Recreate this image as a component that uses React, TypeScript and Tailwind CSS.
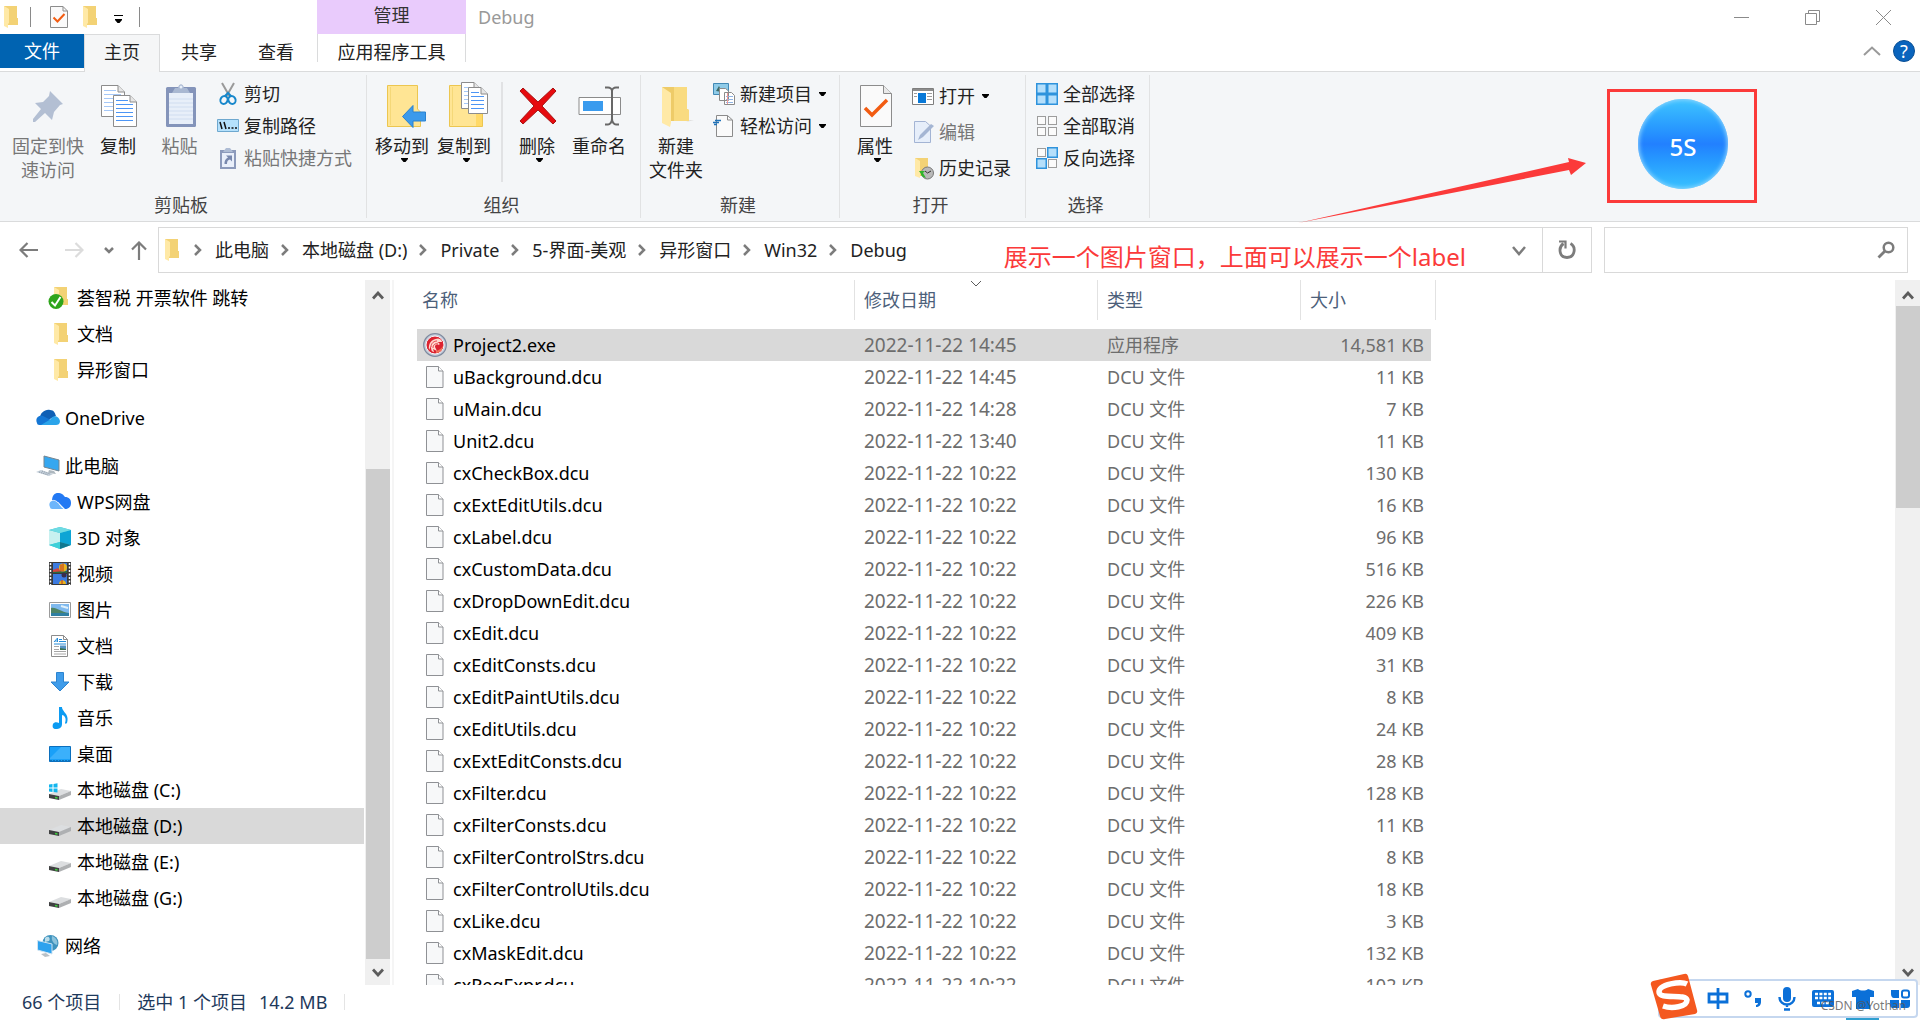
import React from "react";

type P = { className?: string };
type Kids = { children: React.ReactNode };

function Svg({ w, h, vb, children, className = "" }: { w: number; h: number; vb?: string; className?: string } & Kids) {
  return (
    <svg width={w} height={h} viewBox={vb ?? `0 0 ${w} ${h}`} fill="none" aria-hidden="true" className={`shrink-0 ${className}`}>
      {children}
    </svg>
  );
}

/* ---------- small icons ---------- */
const Folder = ({ className }: P) => (
  <Svg w={22} h={22} className={className}>
    <path d="M5 0H18V12H19V19H5Z" fill="#f3d275" />
    <path d="M5 0L10 3V17L9 18V22L5 20Z" fill="#ffe9a6" />
  </Svg>
);
const FolderCheck = () => (
  <Svg w={22} h={22} className="overflow-visible">
    <path d="M5 0H18V12H19V18H5Z" fill="#f3d275" />
    <path d="M5 0L10 3V10H5Z" fill="#ffe9a6" />
    <circle cx="7" cy="14.500" r="7.500" fill="#2fa51c" />
    <path d="M2.500 15L6 18.500L11.500 10" stroke="#fff" strokeWidth="2" />
  </Svg>
);
const PropsSmall = () => (
  <Svg w={18} h={22}>
    <path d="M.5 .5H13L17.500 5V21.500H.5Z" fill="#fafafa" stroke="#8c8c8c" />
    <path d="M13 .5V5H17.500" stroke="#8c8c8c" />
    <path d="M3.500 11.500L7.500 15.500L14.500 8" stroke="#f25c12" strokeWidth="2" />
  </Svg>
);
const Page = () => (
  <Svg w={18} h={22}>
    <path d="M.5 .5H12.500L17 5V21.500H.5Z" fill="#f7f8f9" stroke="#8f9195" />
    <path d="M12.500 .5V5H17" fill="#fff" stroke="#8f9195" />
  </Svg>
);
const Exe = () => (
  <Svg w={24} h={24}>
    <circle cx="12" cy="12" r="11.300" fill="#c3ccda" stroke="#7f8b9f" strokeWidth="1.200" />
    <circle cx="12" cy="12" r="9" fill="#dc2330" stroke="#f5f5f8" />
    <path d="M6 17C5 11 8 6 15 5.500C18 6 19 8 19 9L14 9C17 10 17 11 16 12C13 11 12 12 12 14L14 18L10 16L11 19C8 19 8 15 8 13Z" fill="#ffd9cf" />
    <path d="M8 14C8 10 11 8 14 8M10 15C10 12 12 10 15 11" stroke="#dc2330" strokeWidth=".8" />
    <path d="M13 20C17 20 20 17 20 13C18 16 16 17 13 18Z" fill="#f0745c" />
  </Svg>
);
const Cloud = () => (
  <Svg w={24} h={22}>
    <path d="M4 11C4 6 9 2 14 3C18 3 19 6 20 9L12 13Z" fill="#0f5fb5" />
    <path d="M1 16C-1 12 2 8 7 9L17 14L8 18H5C3 18 1 18 1 16Z" fill="#1476d4" />
    <path d="M5 18L15 12C16 8 23 8 24 14C24 17 22 18 20 18Z" fill="#2ba4ea" />
  </Svg>
);
const Wps = () => (
  <Svg w={22} h={22}>
    <path d="M3 10C3 4 6 1.500 10 2C14 2.500 15 5 16 6C20 6 22 8.500 22 12C22 15.500 20 18 16 18L9 11Z" fill="#2379f3" />
    <path d="M1 16C-1 12 2 9 6 10C11 11 11 16 15 18H5C3 18 1 18 1 16Z" fill="#6db5fb" />
    <path d="M3 9.500C9 8 11 16 15 18" stroke="#fff" strokeWidth=".8" />
  </Svg>
);
const Pc = () => (
  <Svg w={24} h={22}>
    <path d="M8 1L23 5V16L8 12Z" fill="#35a7f0" stroke="#77858f" />
    <path d="M13 15L18 16L20 19L12 18Z" fill="#aeb8bf" />
    <path d="M0 17L5 15L17 19L13 21Z" fill="#c2cdd8" />
    <path d="M3 17L12 20M6 16L14 19" stroke="#8d9aa6" strokeDasharray="1 1" />
  </Svg>
);
const Cube = () => (
  <Svg w={22} h={22}>
    <path d="M11 0L22 3V18L11 22L0 18V3Z" fill="#36c0d6" />
    <path d="M0 3L11 6V15L0 18Z" fill="#c8f1f0" />
    <path d="M11 6L22 3V18L11 15Z" fill="#0ea5d5" />
    <path d="M0 18L11 15V22Z" fill="#3ed0d8" />
    <path d="M22 18L11 15V22Z" fill="#11788f" />
    <path d="M0 3L11 0L22 3L11 6Z" fill="#6fdbe3" />
  </Svg>
);
const Video = () => (
  <Svg w={22} h={24}>
    <path d="M0 0H22V23H0Z" fill="#3a3a3a" />
    <path d="M4 1H18V11H4ZM4 12H18V22H4Z" fill="#3c7be0" />
    <path d="M4 8L9 6L13 10V11H4Z" fill="#d2463f" />
    <path d="M4 10L18 9V11H4Z" fill="#2c6a3a" />
    <circle cx="14" cy="5.500" r="4" fill="#e9b51c" />
    <path d="M14 1.500V9.500M12 2.500V9" stroke="#bf3027" />
    <circle cx="15" cy="13" r="2.500" fill="#3a2d4d" />
    <path d="M10 22C10 17 17 17 17 22Z" fill="#e9b51c" />
    <path d="M13 18V22" stroke="#bf3027" />
    <path d="M1.500 1V23M20.500 1V23" stroke="#fff" strokeWidth="1.500" strokeDasharray="2 1.500" />
  </Svg>
);
const Picture = () => (
  <Svg w={22} h={22}>
    <path d="M.5 3.500H21.500V18.500H.5Z" fill="#fff" stroke="#9b9b9b" />
    <path d="M2 5H20V17H2Z" fill="#7fb9ee" />
    <path d="M2 9C8 8 11 13 20 14H2Z" fill="#4e8466" />
    <path d="M2 14H20V17H2Z" fill="#2f7fa3" />
    <path d="M12 7L19 9" stroke="#dff0fb" strokeWidth="2" />
  </Svg>
);
const Doc = () => (
  <Svg w={22} h={22}>
    <path d="M2.500 .5H14.500L18.500 4.500V21.500H2.500Z" fill="#fff" stroke="#8c8c8c" />
    <path d="M14.500 .5V4.500H18.500" stroke="#8c8c8c" />
    <path d="M5 7L8.500 3V7M6 6H9M10 4.500H13M10 6.500H17M5 9H17" stroke="#268cd8" />
    <path d="M5 11.500H10M5 14.500H10M5 16.500H17M5 19H17" stroke="#a6a6a6" />
    <path d="M11 10.500H17V15H11Z" fill="#5693c4" />
    <path d="M11 13L17 14V15H11Z" fill="#3b7050" />
  </Svg>
);
const Download = () => (
  <Svg w={22} h={22}>
    <path d="M7.500 1.500H14.500V11H20L11 20L2 11H7.500Z" fill="#3f9cea" stroke="#2c84d0" />
  </Svg>
);
const Music = () => (
  <Svg w={22} h={24}>
    <path d="M10 1H13C13 6 21 8 18 17C17 18 16 18 16 17C18 12 15 9 13 9V18C13 22 10 23 7 23C4 23 3 21 4 18C5 16 8 16 10 17Z" fill="#0c9bf2" />
  </Svg>
);
const Desktop = () => (
  <Svg w={22} h={22}>
    <path d="M.5 3.500H21.500V18.500H.5Z" fill="#19a0f8" stroke="#0b6fbd" />
    <path d="M12 4H21V16H1V15Z" fill="#3bb0fb" />
    <path d="M1 17.500H18M19 17.500H21" stroke="#1073ba" strokeDasharray="2 1" />
  </Svg>
);
const Disk = ({ win }: { win?: boolean }) => (
  <Svg w={22} h={22} className="overflow-visible">
    <path d="M0 15L12 10L22 12L10 17Z" fill="#dcdee0" />
    <path d="M0 15L10 17V21L0 19Z" fill="#3f4041" />
    <path d="M10 17L22 12V16L10 21Z" fill="#aeb0b2" />
    <path d="M6 18.500L8.500 19" stroke="#3cd13c" strokeWidth="1.500" />
    {win && <path d="M0 5.500L3.500 5V8.500H0ZM4.500 5L8.500 4.200V8.500H4.500ZM0 9.500H3.500V13L0 12.500ZM4.500 9.500H8.500V13.500L4.500 13Z" fill="#12b5ee" />}
  </Svg>
);
const Network = () => (
  <Svg w={24} h={22}>
    <circle cx="14.500" cy="8" r="8" fill="#3f93be" />
    <path d="M9 3C12 0 15 3 13 6L9 7Z" fill="#b9dcea" />
    <path d="M16 1C21 3 22 7 21 10C18 9 15 6 16 1Z" fill="#8cc3dc" />
    <path d="M1.500 5.500L16 9V19L1.500 15Z" fill="#2ea2ee" stroke="#cfe4f2" />
    <path d="M5 19L10 18L14 21L9 22Z" fill="#b9c0c6" />
  </Svg>
);

/* ---------- ribbon icons ---------- */
const Sheet = ({ x, y, w = 24, h = 32, c = "#4c95f5" }: { x: number; y: number; w?: number; h?: number; c?: string }) => (
  <g transform={`translate(${x} ${y})`}>
    <path d={`M.5 .5H${w - 7}L${w - 0.5} 7V${h - 0.5}H.5Z`} fill="#fff" stroke="#8c8c8c" />
    <path d={`M${w - 7} .5V7H${w - 0.5}`} fill="#e6e6e6" stroke="#8c8c8c" />
    {[5, 9, 13, 17, 21, 25].filter((v) => v < h - 2).map((v) => (
      <path key={v} d={`M3 ${v + 0.5}H${v < 8 ? w - 9 : w - 4}`} stroke={c} />
    ))}
  </g>
);
const Pin = () => (
  <Svg w={48} h={48}>
    <path d="M26 9L39 22L36 23L30 30L28 38L21 31L11 40H9V37L17 27L11 21L19 20L25 14Z" fill="#b3bfd3" />
  </Svg>
);
const Copy = () => (
  <Svg w={48} h={48}>
    <Sheet x={7} y={3} c="#a5c8f8" />
    <Sheet x={19} y={13} />
  </Svg>
);
const Paste = () => (
  <Svg w={48} h={48}>
    <rect x="10" y="5" width="30" height="40" rx="1.500" fill="#8494ba" />
    <path d="M13 11H37V42H13Z" fill="#e8eff9" />
    <path d="M13 17H37M13 21H37M13 25H37M13 29H37M13 33H37M13 37H37" stroke="#d0ddf0" />
    <path d="M16 11L19 6H22C23 1 27 1 28 6H31L34 11Z" fill="#a9b8d2" />
    <circle cx="25" cy="5" r="1.500" fill="#e8eff9" />
  </Svg>
);
const MoveTo = () => (
  <Svg w={48} h={48}>
    <path d="M9.500 3.500H39.500V27L42.500 30V44.500H9.500Z" fill="#ffe594" stroke="#ecc650" />
    <path d="M12.500 5V43" stroke="#f5d878" />
    <path d="M24.500 34.500L35 23.500V30H47.500V39H35V45.500Z" fill="#3c9aeb" stroke="#2b82cf" />
  </Svg>
);
const CopyTo = () => (
  <Svg w={48} h={48}>
    <path d="M9.500 3.500H35V30L42.500 31V44.500H9.500Z" fill="#ffe594" stroke="#ecc650" />
    <path d="M12.500 5V43" stroke="#f5d878" />
    <path d="M36 31H42V44H36Z" fill="#ffd967" />
    <Sheet x={21} y={0} w={20} h={27} c="#a5c8f8" />
    <Sheet x={28} y={5} w={20} h={27} />
  </Svg>
);
const Delete = () => (
  <Svg w={48} h={48}>
    <path d="M10 6L25 20L40 6L43 9L29 24L43 39L40 42L25 28L10 42L7 39L21 24L7 9Z" fill="#e60b0f" stroke="#a81414" />
  </Svg>
);
const Rename = () => (
  <Svg w={48} h={48}>
    <path d="M4 15.500H45.500V32.500H4Z" fill="#fff" stroke="#8b8b8b" />
    <path d="M8 19H28V29H8Z" fill="#3a9bee" />
    <path d="M30 5.500H33C35 5.500 37 7 37 9V37C37 40 35 42.500 33 42.500H30M44 5.500H41C39 5.500 37 7 37 9M44 42.500H41C39 42.500 37 40 37 37" stroke="#686868" strokeWidth="2" />
  </Svg>
);
const NewFolder = () => (
  <Svg w={48} h={48}>
    <path d="M38 38H42L34 40Z" fill="#dddddd" />
    <path d="M10 5H35V27L37 28V39H18Z" fill="#eecb68" />
    <path d="M22 5H35V27L37 28V39H22Z" fill="#f9db80" />
    <path d="M10 5L19 11V41L18 45L10 41Z" fill="#ffe9a6" />
  </Svg>
);
const Props = () => (
  <Svg w={48} h={48}>
    <path d="M9.500 3.500H32.500L40.500 11.500V44.500H9.500Z" fill="#fafafa" stroke="#8c8c8c" />
    <path d="M32.500 3.500V11.500H40.500" fill="#e9e9e9" stroke="#8c8c8c" />
    <path d="M14 26L21 33L36 18" stroke="#f25c12" strokeWidth="3.500" />
  </Svg>
);
const Cut = () => (
  <Svg w={22} h={24}>
    <path d="M5 1L13 15M17 1L9 15" stroke="#9a9a9a" strokeWidth="2" />
    <ellipse cx="7" cy="18" rx="3.500" ry="4" stroke="#1787cb" strokeWidth="2" transform="rotate(25 7 18)" />
    <ellipse cx="15" cy="18" rx="3.500" ry="4" stroke="#1787cb" strokeWidth="2" transform="rotate(-25 15 18)" />
    <path d="M8 14L11 11L14 14" stroke="#1787cb" strokeWidth="2" />
  </Svg>
);
const CopyPath = () => (
  <Svg w={22} h={22}>
    <path d="M.5 4.500H21.500V16.500H.5Z" fill="#b5e1fc" stroke="#6ea8cf" />
    <path d="M3 7L5 14M7 7L9 14M11 13H13M14.500 13H16.500M18 13H20" stroke="#111" strokeWidth="1.500" />
  </Svg>
);
const PasteLink = () => (
  <Svg w={22} h={24}>
    <path d="M3 4H19V23H3Z" fill="#8c9abb" />
    <path d="M5 7H17V21H5Z" fill="#e9effa" />
    <path d="M6 6L9 2H13L16 6Z" fill="#aebcd4" />
    <path d="M9 9.500H15V15.500L13 13.500C11 14 10 15 10 18H7.500C7.500 14 9 12.500 11 11.500Z" fill="#7888ad" />
  </Svg>
);
const NewItem = () => (
  <Svg w={22} h={24}>
    <path d="M.5 1.500H15.500V12.500H.5Z" fill="#8fcbe8" stroke="#4289b5" />
    <path d="M3 9L6 4L9 10Z" fill="#3c6c6b" />
    <path d="M6.500 6.500H12.500L15.500 9V18.500H6.500ZM11.500 10.500H18.500L21.500 13.500V22.500H11.500Z" fill="#fff" stroke="#8b8b8b" />
    <path d="M13 14.500H20M13 17.500H20M13 20.500H20" stroke="#8fb4e4" />
    <path d="M14.500 11V22" stroke="#e99" />
  </Svg>
);
const EasyAccess = () => (
  <Svg w={22} h={24}>
    <path d="M3.500 1.500H14.500L19.500 6V22.500H3.500Z" fill="#fafafa" stroke="#8b8b8b" />
    <path d="M14.500 1.500V6H19.500" stroke="#8b8b8b" />
    <path d="M2 6.500H8M0 8.500H6M1 10.500H4" stroke="#1f72b8" strokeWidth="1.400" />
  </Svg>
);
const Open = () => (
  <Svg w={22} h={22}>
    <path d="M.5 3.500H21.500V19.500H.5Z" fill="#fff" stroke="#7e7e7e" />
    <path d="M1 4H21V6H1Z" fill="#8d8d8d" />
    <path d="M6 8H14V18H6Z" fill="#0878d7" />
    <path d="M2 8.500H5M2 11.500H5M15 8.500H20M15 11.500H20M15 14.500H20" stroke="#9c9c9c" />
  </Svg>
);
const Edit = () => (
  <Svg w={22} h={24}>
    <path d="M2.500 1.500H13.500L18.500 6V22.500H2.500Z" fill="#e6eefa" stroke="#a3b4d4" />
    <path d="M6 20L8 15L19 4L22 6L11 17Z" fill="#a4b5d3" />
  </Svg>
);
const History = () => (
  <Svg w={22} h={24}>
    <path d="M3 2H16V20H3Z" fill="#f3d275" />
    <path d="M3 2L8 5V22L3 20Z" fill="#ffe9a6" />
    <circle cx="15.500" cy="17" r="6" fill="#b9b9b9" stroke="#777" />
    <path d="M15.500 17L19 15M15.500 17L13 15" stroke="#333" />
    <path d="M7 15H13L11 17L14 22C10 21 9 19 9 18Z" fill="#2fb52c" />
  </Svg>
);
function Squares({ on }: { on: boolean[] }) {
  return (
    <Svg w={22} h={22}>
      {[[0, 0], [11, 0], [0, 11], [11, 11]].map(([x, y], i) => (
        <rect key={i} x={x + (on[i] ? 0.75 : 1.5)} y={y + (on[i] ? 0.75 : 1.5)} width={on[i] ? 9.5 : 8} height={on[i] ? 9.5 : 8} fill={on[i] ? "#b5dffb" : "#fbfbfb"} stroke={on[i] ? "#2f93dc" : "#9d9d9d"} strokeWidth={on[i] ? 1.5 : 1} />
      ))}
    </Svg>
  );
}
const Caret = ({ className }: P) => (
  <Svg w={7} h={5} className={className}>
    <path d="M0 0H7V1L4.500 4H2.500L0 1Z" fill="#000" />
  </Svg>
);
const Chev = ({ d = "down", c = "#5c5c5c" }: { d?: "down" | "up" | "right"; c?: string }) =>
  d === "right" ? (
    <Svg w={8} h={12}><path d="M1 1L6 6L1 11" stroke={c} strokeWidth="2.500" /></Svg>
  ) : (
    <Svg w={12} h={9}><path d={d === "down" ? "M1 1.500L6 7L11 1.500" : "M1 7.500L6 2L11 7.500"} stroke={c} strokeWidth="2.800" /></Svg>
  );

/* ---------- ribbon parts ---------- */
function Big({ icon, lines, w, caret, off }: { icon: React.ReactNode; lines: string[]; w: string; caret?: boolean; off?: boolean }) {
  return (
    <button type="button" disabled={off} className={`flex flex-col items-center pt-2.5 ${w} ${off ? "text-[#777777]" : "text-[#222222]"}`}>
      {icon}
      <span className="mt-1 leading-6">
        {lines.map((l) => (
          <span key={l} className="block whitespace-nowrap">{l}</span>
        ))}
      </span>
      {caret && <Caret className="ml-1" />}
    </button>
  );
}
function Small({ icon, text, caret, off, tall }: { icon: React.ReactNode; text: string; caret?: boolean; off?: boolean; tall?: boolean }) {
  return (
    <button type="button" disabled={off} className={`flex items-center gap-[5px] whitespace-nowrap leading-6 ${tall ? "h-9" : "h-8"} ${off ? "text-[#777777]" : "text-[#222222]"}`}>
      {icon}
      {text}
      {caret && <Caret className="ml-0.5" />}
    </button>
  );
}
function Group({ name, w, children }: { name: string; w: string } & Kids) {
  return (
    <section aria-label={name} className={`flex shrink-0 flex-col ${w}`}>
      <div className="-mt-[3px] flex flex-1">{children}</div>
      <h2 className="pb-px pr-1 text-center leading-6 text-[#444444]">{name}</h2>
    </section>
  );
}

/* ---------- data ---------- */
const crumbs = ["此电脑", "本地磁盘 (D:)", "Private", "5-界面-美观", "异形窗口", "Win32", "Debug"];

const tree: { icon: React.ReactNode; text: string; top?: boolean; sel?: boolean }[] = [
  { icon: <FolderCheck />, text: "荟智税 开票软件 跳转" },
  { icon: <Folder />, text: "文档" },
  { icon: <Folder />, text: "异形窗口" },
  { icon: <Cloud />, text: "OneDrive", top: true },
  { icon: <Pc />, text: "此电脑", top: true },
  { icon: <Wps />, text: "WPS网盘" },
  { icon: <Cube />, text: "3D 对象" },
  { icon: <Video />, text: "视频" },
  { icon: <Picture />, text: "图片" },
  { icon: <Doc />, text: "文档" },
  { icon: <Download />, text: "下载" },
  { icon: <Music />, text: "音乐" },
  { icon: <Desktop />, text: "桌面" },
  { icon: <Disk win />, text: "本地磁盘 (C:)" },
  { icon: <Disk />, text: "本地磁盘 (D:)", sel: true },
  { icon: <Disk />, text: "本地磁盘 (E:)" },
  { icon: <Disk />, text: "本地磁盘 (G:)" },
  { icon: <Network />, text: "网络", top: true },
];

const files: [string, string, string][] = [
  ["Project2.exe", "14:45", "14,581"],
  ["uBackground.dcu", "14:45", "11"],
  ["uMain.dcu", "14:28", "7"],
  ["Unit2.dcu", "13:40", "11"],
  ["cxCheckBox.dcu", "10:22", "130"],
  ["cxExtEditUtils.dcu", "10:22", "16"],
  ["cxLabel.dcu", "10:22", "96"],
  ["cxCustomData.dcu", "10:22", "516"],
  ["cxDropDownEdit.dcu", "10:22", "226"],
  ["cxEdit.dcu", "10:22", "409"],
  ["cxEditConsts.dcu", "10:22", "31"],
  ["cxEditPaintUtils.dcu", "10:22", "8"],
  ["cxEditUtils.dcu", "10:22", "24"],
  ["cxExtEditConsts.dcu", "10:22", "28"],
  ["cxFilter.dcu", "10:22", "128"],
  ["cxFilterConsts.dcu", "10:22", "11"],
  ["cxFilterControlStrs.dcu", "10:22", "8"],
  ["cxFilterControlUtils.dcu", "10:22", "18"],
  ["cxLike.dcu", "10:22", "3"],
  ["cxMaskEdit.dcu", "10:22", "132"],
  ["cxRegExpr.dcu", "10:22", "102"],
];

function ScrollBar({ before, thumb }: { before: string; thumb: string }) {
  return (
    <div className="flex w-[25px] shrink-0 flex-col items-center bg-[#f0f0f0]">
      <button type="button" aria-label="向上滚动" className="flex h-[26px] w-full shrink-0 items-center justify-center pt-1"><Chev d="up" /></button>
      <div className={before} />
      <div className={`w-6 bg-[#cdcdcd] ${thumb}`} />
      <div className="flex-1" />
      <button type="button" aria-label="向下滚动" className="flex h-[26px] w-full shrink-0 items-center justify-center"><Chev /></button>
    </div>
  );
}

const headers = ["名称", "修改日期", "类型", "大小"];

export default function App() {
  return (
    <div className="relative flex h-screen flex-col overflow-hidden bg-white font-['Noto_Sans','Noto_Sans_CJK_SC',sans-serif] text-[18px] leading-6 text-[#111111]">
      {/* title bar and tabs */}
      <header className="flex h-[71px] shrink-0">
        <div className="flex w-[317px] shrink-0 flex-col">
          <div className="flex h-[34px] items-center">
            <Folder className="-ml-px" />
            <span className="ml-[9px] h-5 w-px bg-[#8a8a8a]" />
            <button type="button" aria-label="属性" className="ml-[19px]"><PropsSmall /></button>
            <button type="button" aria-label="新建文件夹" className="ml-2.5"><Folder /></button>
            <button type="button" aria-label="自定义快速访问工具栏" className="ml-3.5">
              <Svg w={9} h={9} className="mt-1"><path d="M0 .5H9" stroke="#000" /><path d="M1 4H8V5L5.500 8H3.500L1 5Z" fill="#000" /></Svg>
            </button>
            <span className="ml-4 h-5 w-px bg-[#8a8a8a]" />
          </div>
          <nav className="flex flex-1">
            <button type="button" className="h-[34px] w-[84px] bg-[#0063b1] text-white">文件</button>
            <button type="button" className="relative z-10 -mb-px h-[38px] w-[76px] border-x border-t border-[#dadbdc] bg-[#f5f6f7] pb-1 text-[#222222]">主页</button>
            <button type="button" className="h-[36px] w-[78px] text-[#222222]">共享</button>
            <button type="button" className="h-[36px] w-[76px] text-[#222222]">查看</button>
          </nav>
        </div>
        <div className="flex w-[149px] shrink-0 flex-col">
          <div className="flex h-[34px] items-center justify-center bg-[#e9cbfc] pb-1 text-[#333333]">管理</div>
          <button type="button" className="h-[28px] whitespace-nowrap border-x border-[#dadbdc] pt-1.5 text-[#222222]">应用程序工具</button>
        </div>
        <div className="flex flex-1 flex-col">
          <div className="flex h-[34px] items-center">
            <h1 className="ml-3 text-[#999999]">Debug</h1>
            <div className="ml-auto mr-[29px] flex items-center gap-14">
              <button type="button" aria-label="最小化"><Svg w={15} h={15}><path d="M0 7.500H15" stroke="#8a8a8a" /></Svg></button>
              <button type="button" aria-label="还原"><Svg w={15} h={15}><path d="M.5 3.500H11.500V14.500H.5ZM3.500 3V.5H14.500V11.500H12" stroke="#8a8a8a" /></Svg></button>
              <button type="button" aria-label="关闭"><Svg w={15} h={15}><path d="M0 0L15 15M15 0L0 15" stroke="#8a8a8a" /></Svg></button>
            </div>
          </div>
          <div className="ml-auto mr-[5px] flex flex-1 items-center gap-3 pb-1">
            <button type="button" aria-label="最小化功能区"><Svg w={18} h={10}><path d="M1 9L9 1.500L17 9" stroke="#9a9a9a" strokeWidth="2" /></Svg></button>
            <button type="button" aria-label="帮助" className="flex size-[22px] items-center justify-center rounded-full border border-[#0a4f94] bg-[#0a64bd] text-[18px] text-white">?</button>
          </div>
        </div>
      </header>

      {/* ribbon */}
      <div className="flex h-[151px] shrink-0 divide-x divide-[#e1e2e3] border-y border-[#dadbdc] bg-[#f4f6f8] py-[3px]">
        <Group name="剪贴板" w="w-[367px]">
          <Big w="ml-0.5 w-[92px]" off icon={<Pin />} lines={["固定到快", "速访问"]} />
          <Big w="w-12" icon={<Copy />} lines={["复制"]} />
          <Big w="w-[75px]" off icon={<Paste />} lines={["粘贴"]} />
          <div className="pt-1.5">
            <Small icon={<Cut />} text="剪切" />
            <Small icon={<CopyPath />} text="复制路径" />
            <Small off icon={<PasteLink />} text="粘贴快捷方式" />
          </div>
        </Group>
        <Group name="组织" w="w-[274px]">
          <Big w="ml-1 w-[62px]" caret icon={<MoveTo />} lines={["移动到"]} />
          <Big w="w-[62px]" caret icon={<CopyTo />} lines={["复制到"]} />
          <span className="ml-1.5 mt-2.5 h-[100px] w-0.5 bg-[#e1e2e4]" />
          <Big w="w-[68px]" caret icon={<Delete />} lines={["删除"]} />
          <Big w="w-14" icon={<Rename />} lines={["重命名"]} />
        </Group>
        <Group name="新建" w="w-[199px]">
          <Big w="w-[70px]" icon={<NewFolder />} lines={["新建", "文件夹"]} />
          <div className="ml-0.5 pt-1.5">
            <Small caret icon={<NewItem />} text="新建项目" />
            <Small caret icon={<EasyAccess />} text="轻松访问" />
          </div>
        </Group>
        <Group name="打开" w="w-[186px]">
          <Big w="w-[70px]" caret icon={<Props />} lines={["属性"]} />
          <div className="ml-0.5 pt-1.5">
            <Small tall caret icon={<Open />} text="打开" />
            <Small tall off icon={<Edit />} text="编辑" />
            <Small tall icon={<History />} text="历史记录" />
          </div>
        </Group>
        <Group name="选择" w="w-[124px]">
          <div className="ml-2.5 pt-1.5">
            <Small icon={<Squares on={[true, true, true, true]} />} text="全部选择" />
            <Small icon={<Squares on={[false, false, false, false]} />} text="全部取消" />
            <Small icon={<Squares on={[false, true, true, false]} />} text="反向选择" />
          </div>
        </Group>
        <div />
      </div>

      {/* address bar */}
      <div className="flex shrink-0 items-stretch pb-[7px] pr-3 pt-[5px]">
        <div className="flex w-[158px] shrink-0 items-center pl-[19px]">
          <button type="button" aria-label="后退"><Svg w={19} h={16}><path d="M19 8H2M8.500 1L1.500 8L8.500 15" stroke="#7c7c7c" strokeWidth="2.200" /></Svg></button>
          <button type="button" aria-label="前进" className="ml-[27px]"><Svg w={19} h={16}><path d="M0 8H17M10.500 1L17.500 8L10.500 15" stroke="#dcdcdc" strokeWidth="2.200" /></Svg></button>
          <button type="button" aria-label="最近位置" className="ml-5"><Svg w={10} h={7}><path d="M1 1L5 5L9 1" stroke="#7c7c7c" strokeWidth="2.500" /></Svg></button>
          <button type="button" aria-label="上移" className="ml-[17px]"><Svg w={16} h={19}><path d="M8 19V2M1 8.500L8 1.500L15 8.500" stroke="#7c7c7c" strokeWidth="2.200" /></Svg></button>
        </div>
        <div className="flex h-[46px] flex-1 items-center border border-[#d9d9d9]">
          <Folder className="ml-px" />
          {crumbs.map((c) => (
            <React.Fragment key={c}>
              <span className="ml-3 mr-[13px]"><Chev d="right" c="#7c7c7c" /></span>
              <a href="#" className="whitespace-nowrap text-[#222222]">{c}</a>
            </React.Fragment>
          ))}
          <button type="button" aria-label="以前的位置" className="ml-auto mr-4"><Svg w={14} h={11}><path d="M1 2L7 9L13 2" stroke="#7c7c7c" strokeWidth="2.500" /></Svg></button>
          <button type="button" aria-label="刷新" className="flex h-full w-[49px] items-center justify-center border-l border-[#d9d9d9]">
            <Svg w={18} h={20}><path d="M12.500 3.500C18.500 7 17 17.500 9 17.500C1 17.500 0 7.500 5.500 3.500" stroke="#7c7c7c" strokeWidth="2.800" /><path d="M1 1.500H7.500V8.500" stroke="#7c7c7c" strokeWidth="2.200" /></Svg>
          </button>
        </div>
        <label className="ml-3 flex w-[304px] items-center border border-[#d9d9d9] pr-3">
          <input type="search" aria-label="搜索" className="min-w-0 flex-1 bg-transparent px-2 outline-none" />
          <Svg w={18} h={18}><circle cx="11.500" cy="6.500" r="4.800" stroke="#7c7c7c" strokeWidth="2.500" /><path d="M8 10L1.500 16.500" stroke="#7c7c7c" strokeWidth="2.800" /></Svg>
        </label>
      </div>

      {/* panes */}
      <div className="flex min-h-0 flex-1 overflow-hidden">
        <nav aria-label="导航窗格" className="w-[364px] shrink-0 overflow-hidden">
          <ul>
            {tree.map((t, i) => (
              <li key={i} className={t.top || i === 4 ? "pt-3" : ""}>
                <a href="#" className={`flex h-9 items-center whitespace-nowrap text-black ${t.top ? "gap-[5px] pl-9" : "gap-1.5 pl-[49px]"} ${t.sel ? "bg-[#d9d9d9]" : ""}`}>
                  {t.icon}
                  {t.text}
                </a>
              </li>
            ))}
          </ul>
        </nav>
        <div className="ml-px flex"><ScrollBar before="h-[163px] shrink-0" thumb="h-[490px] shrink-0" /></div>
        <div className="ml-0.5 w-0.5 shrink-0 bg-[#f5f5f5]" />
        <main className="min-w-0 flex-1 overflow-hidden pl-[23px]">
          <table className="w-[1019px] table-fixed border-collapse whitespace-nowrap text-left">
            <colgroup>
              <col className="w-[438px]" />
              <col className="w-[243px]" />
              <col className="w-[203px]" />
              <col className="w-[130px]" />
              <col />
            </colgroup>
            <thead>
              <tr className="h-[49px] align-top text-[#4c607a]">
                {headers.map((h, i) => (
                  <th key={h} scope="col" className="relative p-0 font-normal">
                    <div className={`flex h-10 items-center ${i === 0 ? "pl-[5px]" : "pl-[9px]"} ${i < 3 ? "border-r border-[#e2e2e2]" : ""}`}>{h}</div>
                    {i === 1 && <Svg w={12} h={8} className="absolute left-[115px] top-0"><path d="M1 1L6 6L11 1" stroke="#5c5c5c" /></Svg>}
                  </th>
                ))}
                <td className="p-0"><div className="h-10 border-r border-[#e2e2e2]" /></td>
              </tr>
            </thead>
            <tbody>
              {files.map(([n, t, s], i) => {
                const bg = i === 0 ? "bg-[#d9d9d9]" : "";
                return (
                  <tr key={n} className="h-8 text-[#6d6d6d]">
                    <td className={`p-0 ${bg}`}>
                      <div className="flex h-8 items-center text-black">
                        <span className="flex w-9 justify-center">{i === 0 ? <Exe /> : <Page />}</span>
                        {n}
                      </div>
                    </td>
                    <td className={`p-0 pl-[9px] text-[19px] ${bg}`}>2022-11-22 {t}</td>
                    <td className={`p-0 pl-[9px] ${bg}`}>{i === 0 ? "应用程序" : "DCU 文件"}</td>
                    <td className={`p-0 pr-[7px] text-right ${bg}`}>{s} KB</td>
                    <td />
                  </tr>
                );
              })}
            </tbody>
          </table>
        </main>
        <ScrollBar before="h-0" thumb="h-[202px] shrink-0" />
      </div>

      {/* status bar */}
      <footer className="flex h-[35px] shrink-0 items-center pb-0.5 pl-[22px] text-[#1e395b]">
        <span>66 个项目</span>
        <span className="ml-[18px] h-4 w-px bg-[#e4e4e4]" />
        <span className="ml-[17px]">选中 1 个项目</span>
        <span className="ml-3">14.2 MB</span>
        <span className="ml-[17px] h-4 w-px bg-[#e4e4e4]" />
      </footer>

      {/* floating round window with its frame and pointer */}
      <div className="absolute right-[163px] top-[89px] flex h-[114px] w-[150px] items-center justify-center border-[3px] border-[#fb3a3a] pb-1 pl-0.5">
        <div className="flex size-[90px] items-center justify-center rounded-full bg-linear-to-b from-[#40c4ff] via-[#2280ff] to-[#3ac2ff] pt-1.5 text-[24px] font-medium leading-6 text-white shadow-[inset_0_0_4px_1px_#8fd4ff]">5S</div>
      </div>
      <Svg w={290} h={66} className="absolute right-[332px] top-[158px]">
        <path d="M0 65L271 4L270 0L288 5L273 17L271 12Z" fill="#fb3a3a" />
      </Svg>
      <p className="absolute right-[454px] top-[241px] whitespace-nowrap text-[24px] leading-8 text-[#fb3a3a]">展示一个图片窗口，上面可以展示一个label</p>

      {/* input method bar */}
      <div className="absolute bottom-0 right-[41px] h-0.5 w-[33px] bg-[#2f9fd0]" />
      <div className="absolute bottom-[2px] right-[2px] flex h-[39px] w-[260px] items-center justify-between rounded-sm border-2 border-[#c5d7ef] bg-white pl-[47px] pr-1.5">
        <Svg w={22} h={22}><path d="M2 6H20V14H2ZM11 0V21" stroke="#0b70d8" strokeWidth="2.800" /></Svg>
        <Svg w={18} h={18}><circle cx="4" cy="4" r="2.700" stroke="#0b70d8" strokeWidth="2" /><path d="M11 8H17V12C17 15 15 17 12 17V15C13 15 14 14 14 13H11Z" fill="#0b70d8" /></Svg>
        <Svg w={18} h={24}><rect x="5" y="0" width="8" height="15" rx="4" fill="#0b70d8" /><path d="M1.500 10C1.500 20 16.500 20 16.500 10M9 18V20M6 22.500H12" stroke="#0b70d8" strokeWidth="2.400" /></Svg>
        <Svg w={24} h={20}><rect x="1" y="1" width="22" height="17" rx="2" fill="#0b70d8" /><path d="M4 5H20M4 9H20M6 14H18" stroke="#fff" strokeWidth="2.500" strokeDasharray="3 1.400" /></Svg>
        <Svg w={24} h={22}><path d="M7 1C9 3 15 3 17 1L23 3V9H19V21H5V9H1V3Z" fill="#0b70d8" /></Svg>
        <Svg w={20} h={20}><path d="M1 1H9V9H4C2 9 1 7 1 5ZM0 11H9V19H3C1 19 0 18 0 16ZM11 11H20V16C20 18 19 19 17 19H11Z" fill="#0b70d8" /><rect x="12" y="1.500" width="7" height="7" rx="2" stroke="#0b70d8" strokeWidth="2" /></Svg>
      </div>
      <Svg w={48} h={47} className="absolute bottom-0 right-[222px]">
        <path d="M3 8L34 1Q37 0 38 3L47 37Q48 40 45 41L15 46Q11 47 10 43L1 12Q0 9 3 8Z" fill="#f4581f" />
        <path d="M37 11C31 8 9 11 9 19C9 27 36 20 37 27C37 34 22 36 13 33" stroke="#fff" strokeWidth="5.500" />
      </Svg>
      <p className="absolute bottom-1 right-[14px] text-[12px] leading-5 text-[#555555]/80">CSDN @Yothan</p>
    </div>
  );
}
